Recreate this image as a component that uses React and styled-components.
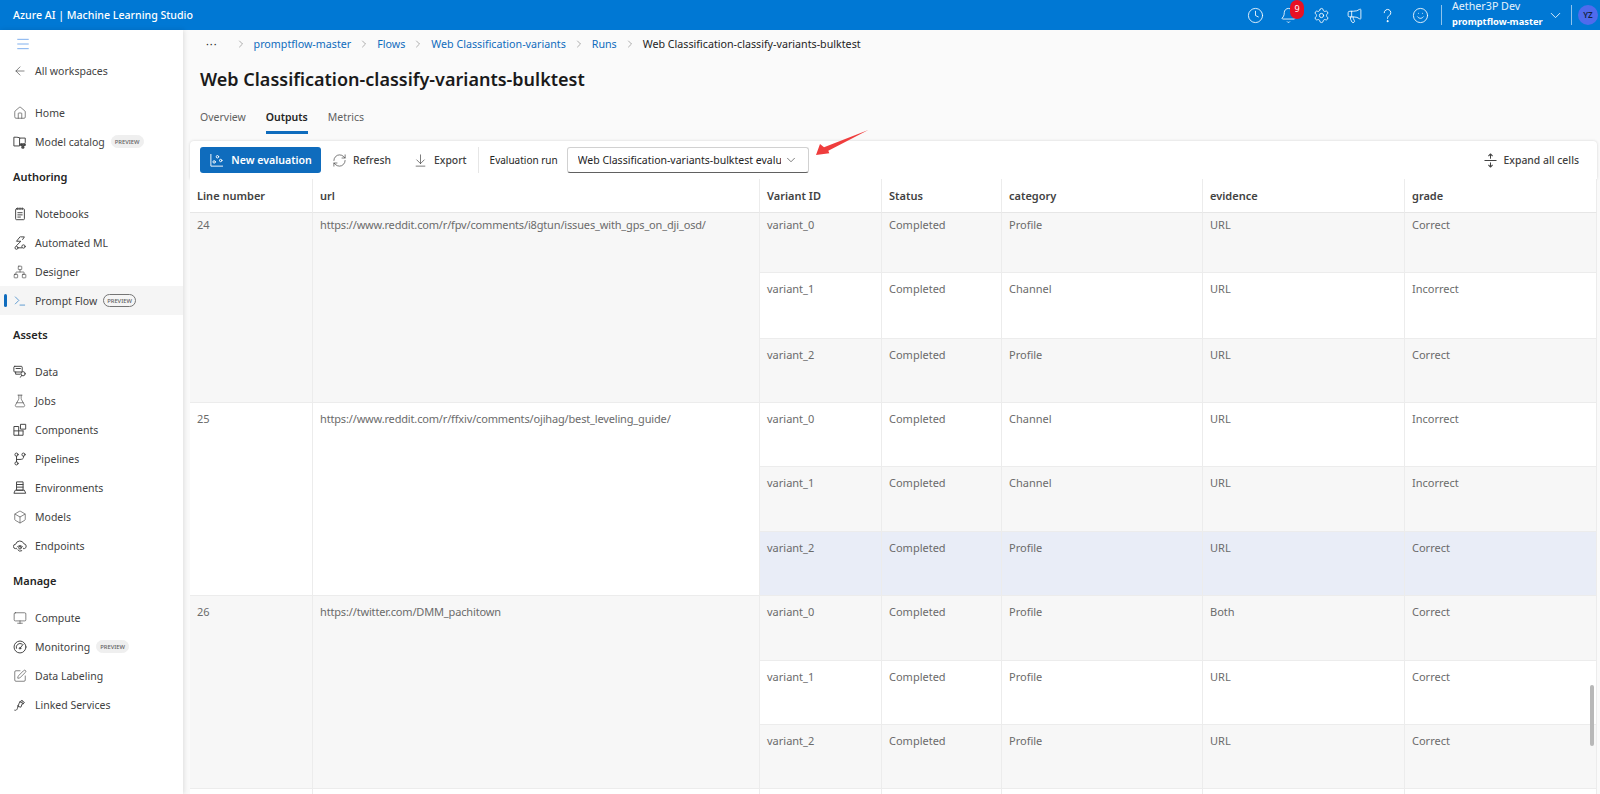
import React from 'react';
import styled, { createGlobalStyle } from 'styled-components';
import {
  ArrowLeft, Box, ChevronDown, ChevronRight, Clock, FlaskConical, Home,
  Menu, Monitor, Network, Settings, Smile, SquarePen, Terminal, Bell, Megaphone,
  RefreshCw, ArrowDownToLine,
} from 'lucide-react';

const FONT = '"Noto Sans", "Open Sans", sans-serif';

const GlobalStyle = createGlobalStyle`
  html, body { margin: 0; height: 100%; overflow: hidden; background: #fafafa; }
  body { font-family: ${FONT}; font-size: 11px; color: #242424; }
  #root { height: 100%; }
  * { box-sizing: border-box; }
`;

const Page = styled.div`
  height: 794px;
  display: flex;
  flex-direction: column;
  position: relative;
  overflow: hidden;
`;

const TopBar = styled.header`
  height: 30px;
  flex: none;
  display: flex;
  align-items: center;
  background: #0078d4;
  color: #fff;
  padding-left: 13px;
`;

const Brand = styled.div`
  font-size: 10.6px;
  font-weight: 500;
  flex: 1;
`;

const TopIcon = styled.span`
  position: relative;
  width: 33px;
  height: 30px;
  display: flex;
  align-items: center;
  justify-content: center;
  svg { width: ${p => (p.$small ? 15 : 17)}px; height: ${p => (p.$small ? 15 : 17)}px; stroke-width: ${p => (p.$small ? 1 : 1.2)}; }
`;

const Badge = styled.span`
  position: absolute;
  top: 0;
  left: 18px;
  width: 14px;
  height: 19px;
  border-radius: 7px;
  background: #e81123;
  font-size: 9px;
  line-height: 18px;
  text-align: center;
`;

const TopDivider = styled.span`
  width: 1px;
  height: 20px;
  background: #8fc3ec;
  margin: 0 ${p => p.$right}px 0 ${p => p.$left}px;
`;

const Account = styled.div`
  width: 95px;
  padding-bottom: 2px;
  white-space: nowrap;
  line-height: 15px;
  font-size: 10.7px;
  color: #e6f2fb;
  b { display: block; font-size: 9.3px; font-weight: 700; color: #fff; }
`;

const Avatar = styled.span`
  width: 20px;
  height: 20px;
  margin-right: 2px;
  border-radius: 50%;
  background: #4f6bed;
  color: #12233f;
  font-size: 8px;
  font-weight: 600;
  line-height: 20px;
  text-align: center;
`;

const Body = styled.div`
  flex: 1;
  display: flex;
  min-height: 0;
`;

const Sidebar = styled.nav`
  width: 183px;
  flex: none;
  background: #fff;
  box-shadow: 1px 0 5px rgba(0, 0, 0, 0.12);
  padding-top: 2px;
  color: #424242;
  z-index: 1;
`;

const Burger = styled.div`
  height: 24px;
  padding-left: 15px;
  display: flex;
  align-items: center;
  color: #3f88e6;
  svg { width: 16px; height: 16px; stroke-width: 1; }
`;

const Item = styled.div`
  position: relative;
  height: 29px;
  padding-left: 13px;
  display: flex;
  align-items: center;
  gap: 8px;
  font-size: 10.5px;
  background: ${p => (p.$active ? '#f5f5f5' : 'transparent')};
  svg { width: 14px; height: 14px; flex: none; stroke-width: 1.1; color: ${p => (p.$active ? '#0f6cbd' : '#424242')}; }
  &::before {
    content: ${p => (p.$active ? "''" : 'none')};
    position: absolute;
    left: 4px;
    top: 8px;
    width: 3px;
    height: 13px;
    border-radius: 2px;
    background: #0f6cbd;
  }
`;

const NavGroup = styled.div`
  margin-top: ${p => p.$top}px;
`;

const SectionTitle = styled.div`
  height: 29px;
  margin-top: ${p => p.$top}px;
  padding-left: 13px;
  font-size: 11px;
  font-weight: 600;
  line-height: 29px;
  color: #242424;
`;

const Preview = styled.span`
  font-size: 5.8px;
  font-weight: 500;
  line-height: 12px;
  height: 13px;
  padding: 0 3px;
  border-radius: 7px;
  margin-left: -2px;
  color: #616161;
  background: ${p => (p.$outlined ? 'transparent' : '#efefef')};
  border: 1px solid ${p => (p.$outlined ? '#757575' : '#efefef')};
`;

const Main = styled.main`
  flex: 1;
  min-width: 0;
  display: flex;
  flex-direction: column;
  padding: 0 3px 0 7px;
`;

const Crumbs = styled.div`
  height: 27px;
  flex: none;
  display: flex;
  align-items: center;
  padding-left: 16px;
  font-size: 10.7px;
  color: #242424;
  svg { width: 12px; height: 12px; stroke-width: 1; color: #616161; margin: 0 7px; }
`;

const Dots = styled.span`
  letter-spacing: 1px;
  margin-right: 10px;
`;

const Crumb = styled.a`
  color: #0f6cbd;
`;

const Title = styled.h1`
  margin: 8px 0 0 10px;
  height: 28px;
  flex: none;
  font-size: 18px;
  font-weight: 600;
  line-height: 28px;
  color: #1a1a1a;
`;

const Tabs = styled.div`
  display: flex;
  flex: none;
  gap: 20px;
  margin: 14px 0 0 10px;
  height: 27px;
`;

const Tab = styled.span`
  position: relative;
  font-size: 10.5px;
  line-height: 20px;
  color: ${p => (p.$active ? '#242424' : '#616161')};
  font-weight: ${p => (p.$active ? 600 : 400)};
  &::after {
    content: ${p => (p.$active ? "''" : 'none')};
    position: absolute;
    left: 0;
    right: 0;
    bottom: 0;
    height: 3px;
    background: #0f6cbd;
  }
`;

const Toolbar = styled.div`
  height: 38px;
  margin-top: 7px;
  flex: none;
  display: flex;
  align-items: center;
  padding: 0 18px 0 10px;
  background: #fff;
  border-radius: 4px 4px 0 0;
  box-shadow: 0 0 3px rgba(0, 0, 0, 0.16);
  font-size: 10px;
  white-space: nowrap;
`;

const PrimaryButton = styled.button`
  height: 26px;
  width: 121px;
  border: 0;
  border-radius: 3px;
  background: #0f6cbd;
  color: #fff;
  display: flex;
  align-items: center;
  justify-content: center;
  gap: 7px;
  white-space: nowrap;
  font: 600 10.6px ${FONT};
  svg { width: 15px; height: 15px; }
`;

const ToolButton = styled.span`
  display: flex;
  align-items: center;
  gap: 6px;
  margin-left: ${p => p.$left}px;
  font-size: 10.4px;
  font-weight: 500;
  color: #424242;
  svg { width: 15px; height: 15px; stroke-width: 1.1; }
`;

const ToolDivider = styled.span`
  width: 1px;
  height: 26px;
  margin: 0 11px;
  background: #e6e6e6;
`;

const Select = styled.div`
  width: 242px;
  height: 26px;
  margin-left: 9px;
  padding: 0 10px;
  display: flex;
  align-items: center;
  gap: 3px;
  border: 1px solid #d1d1d1;
  border-bottom-color: #616161;
  border-radius: 3px;
  font-size: 10.5px;
  span { flex: 1; overflow: hidden; white-space: nowrap; }
  svg { width: 14px; height: 14px; flex: none; stroke-width: 1; }
`;

const Spacer = styled.span`
  flex: 1;
`;

const TableWrap = styled.div`
  flex: 1;
  min-height: 0;
  overflow: hidden;
`;

const Table = styled.table`
  width: 1407px;
  table-layout: fixed;
  border-collapse: separate;
  border-spacing: 0;
  font-size: 11px;
  color: #6b6b6b;
`;

const Th = styled.th`
  height: 34px;
  padding: 0 7px;
  text-align: left;
  font-weight: 600;
  color: #424242;
  background: #fff;
  border-right: 1px solid #ececec;
  border-bottom: 1px solid #e6e6e6;
`;

const Td = styled.td`
  padding: ${p => (p.$scrolled ? 4 : 8)}px 7px 4px;
  vertical-align: top;
  line-height: 16px;
  white-space: nowrap;
  letter-spacing: ${p => (p.$url ? '-0.16px' : 'normal')};
  background: ${p => p.$bg};
  border-right: 1px solid #ececec;
  border-bottom: 1px solid #ececec;
`;

const Row = styled.tr`
  height: ${p => p.$h}px;
`;

const ScrollThumb = styled.div`
  position: absolute;
  left: 1590px;
  top: 685px;
  width: 4px;
  height: 61px;
  border-radius: 2px;
  background: #b8b8b8;
`;

const ArrowMark = styled.svg`
  position: absolute;
  left: 815px;
  top: 128px;
  width: 56px;
  height: 28px;
`;

const Thin = ({ children }) => (
  <svg viewBox="0 0 16 16" fill="none" stroke="currentColor" strokeLinecap="round" strokeLinejoin="round">{children}</svg>
);

const CatalogIcon = () => (
  <Thin>
    <path d="M8 3.500C7 2.600 5 2.500 1 2.500v10h6.500V3.500h6.500v5" />
    <rect x="9" y="10" width="2" height="2" fill="currentColor" />
    <rect x="12" y="10" width="2" height="2" fill="currentColor" />
    <rect x="10.500" y="13" width="2" height="2" fill="currentColor" />
  </Thin>
);
const NotebookIcon = () => (
  <Thin>
    <rect x="3" y="2" width="10" height="12.500" rx="1" />
    <path d="M5.500 1v2M8 1v2M10.500 1v2M5.500 6.500h5M5.500 9h5M5.500 11.500h3" />
  </Thin>
);
const AutoMlIcon = () => (
  <Thin>
    <path d="M8 1 4 6h5l-5 5" />
    <path d="M9 1h4l-2 3" />
    <circle cx="4" cy="13.500" r="1.700" />
    <circle cx="12" cy="12" r="1.900" />
    <path d="M6 13.500h4" />
  </Thin>
);
const DataIcon = () => (
  <Thin>
    <rect x="1" y="1.500" width="9.500" height="6.500" rx="1" />
    <path d="M3 8v2.500h5M3.500 4h5" />
    <circle cx="11.500" cy="10" r="2.400" />
    <path d="M9.800 12 8.500 14" />
  </Thin>
);
const ComponentsIcon = () => (
  <Thin>
    <path d="M1.500 4h5v10h-5zM1.500 9h10M6.500 14h5V9" />
    <rect x="9" y="1.500" width="5.500" height="5.500" />
  </Thin>
);
const PipelineIcon = () => (
  <Thin>
    <circle cx="4" cy="3" r="1.800" />
    <circle cx="12" cy="3" r="1.800" />
    <circle cx="4" cy="13" r="1.800" />
    <path d="M4 4.800v6.400M12 4.800V6c0 2-2 2.500-4 2.500H4" />
  </Thin>
);
const EnvironmentIcon = () => (
  <Thin>
    <rect x="4.500" y="1" width="7" height="9.500" />
    <path d="M4.500 4h7M4.500 7h7M3 10.500h10l1.500 3.500h-13z" />
  </Thin>
);
const EndpointIcon = () => (
  <Thin>
    <path d="M4 11H3a2.500 2.500 0 0 1 0-5 5 5 0 0 1 9.500-.5A2.800 2.800 0 0 1 13 11h-1" />
    <circle cx="8" cy="10" r="1.500" />
    <path d="M5 9a3.500 3.500 0 0 1 6 0M5.500 12.500a3.500 3.500 0 0 0 4.500 1" />
  </Thin>
);
const GaugeIcon = () => (
  <Thin>
    <circle cx="8" cy="8" r="6.800" />
    <path d="M3.800 9.500a4.500 4.500 0 0 1 6.500-5M8 9.500l3.500-4.500" />
    <circle cx="8" cy="9.500" r=".9" />
  </Thin>
);
const LinkedIcon = () => (
  <Thin>
    <path d="M2 14c1.500.5 2.500-.5 3-2l2-6c.5-1.500 2-3 3.500-3" />
    <path d="M5 9c1 .5 3 1.500 4 1.500l2-5c-1-.5-2.500-1-3.500-1" />
    <path d="M10 3l3 2-1.500 2" />
  </Thin>
);
const EvalIcon = () => (
  <Thin>
    <path d="M2 1.500v12.500h12.500" />
    <circle cx="5.500" cy="9.500" r="1.300" />
    <circle cx="9" cy="4" r="1.300" />
    <circle cx="12.500" cy="8" r="1.300" />
  </Thin>
);
const QuestionIcon = () => (
  <Thin>
    <path d="M4.500 5a3.500 3.500 0 1 1 5.500 2.900C8.800 8.700 8 9.500 8 11" />
    <circle cx="8" cy="14" r=".6" fill="currentColor" />
  </Thin>
);
const ExpandIcon = () => (
  <Thin>
    <path d="M8 1v4.500M6 3l2-2 2 2M8 15v-4.500M6 13l2 2 2-2M2 8h12" />
  </Thin>
);

const workspaceItems = [
  { icon: <Home />, label: 'Home' },
  { icon: <CatalogIcon />, label: 'Model catalog', preview: 'fill' },
];
const authoringItems = [
  { icon: <NotebookIcon />, label: 'Notebooks' },
  { icon: <AutoMlIcon />, label: 'Automated ML' },
  { icon: <Network />, label: 'Designer' },
  { icon: <Terminal />, label: 'Prompt Flow', preview: 'outline', active: true },
];
const assetItems = [
  { icon: <DataIcon />, label: 'Data' },
  { icon: <FlaskConical />, label: 'Jobs' },
  { icon: <ComponentsIcon />, label: 'Components' },
  { icon: <PipelineIcon />, label: 'Pipelines' },
  { icon: <EnvironmentIcon />, label: 'Environments' },
  { icon: <Box />, label: 'Models' },
  { icon: <EndpointIcon />, label: 'Endpoints' },
];
const manageItems = [
  { icon: <Monitor />, label: 'Compute' },
  { icon: <GaugeIcon />, label: 'Monitoring', preview: 'fill' },
  { icon: <SquarePen />, label: 'Data Labeling' },
  { icon: <LinkedIcon />, label: 'Linked Services' },
];

const GRAY = '#f7f7f7';
const WHITE = '#ffffff';
const BLUE = '#e9edf7';

// the first group is scrolled partly out of view, so its text sits higher
const groups = [
  {
    line: 24,
    url: 'https://www.reddit.com/r/fpv/comments/i8gtun/issues_with_gps_on_dji_osd/',
    bg: GRAY,
    scrolled: true,
    rows: [
      { h: 60, bg: GRAY, cat: 'Profile', ev: 'URL', grade: 'Correct', scrolled: true },
      { h: 66, bg: WHITE, cat: 'Channel', ev: 'URL', grade: 'Incorrect' },
      { h: 64, bg: GRAY, cat: 'Profile', ev: 'URL', grade: 'Correct' },
    ],
  },
  {
    line: 25,
    url: 'https://www.reddit.com/r/ffxiv/comments/ojihag/best_leveling_guide/',
    bg: WHITE,
    rows: [
      { h: 64, bg: WHITE, cat: 'Channel', ev: 'URL', grade: 'Incorrect' },
      { h: 65, bg: GRAY, cat: 'Channel', ev: 'URL', grade: 'Incorrect' },
      { h: 64, bg: BLUE, cat: 'Profile', ev: 'URL', grade: 'Correct' },
    ],
  },
  {
    line: 26,
    url: 'https://twitter.com/DMM_pachitown',
    bg: GRAY,
    rows: [
      { h: 65, bg: GRAY, cat: 'Profile', ev: 'Both', grade: 'Correct' },
      { h: 64, bg: WHITE, cat: 'Profile', ev: 'URL', grade: 'Correct' },
      { h: 64, bg: GRAY, cat: 'Profile', ev: 'URL', grade: 'Correct' },
    ],
  },
];

const columns = [
  { label: 'Line number', width: 123 },
  { label: 'url', width: 447 },
  { label: 'Variant ID', width: 122 },
  { label: 'Status', width: 120 },
  { label: 'category', width: 201 },
  { label: 'evidence', width: 202 },
  { label: 'grade', width: 192 },
];

const NavItems = ({ items }) => items.map(item => (
  <Item key={item.label} $active={item.active}>
    {item.icon}
    {item.label}
    {item.preview && <Preview $outlined={item.preview === 'outline'}>PREVIEW</Preview>}
  </Item>
));

const App = () => (
  <Page>
    <GlobalStyle />
    <TopBar>
      <Brand>Azure AI | Machine Learning Studio</Brand>
      <TopIcon><Clock /></TopIcon>
      <TopIcon><Bell /><Badge>9</Badge></TopIcon>
      <TopIcon><Settings /></TopIcon>
      <TopIcon><Megaphone /></TopIcon>
      <TopIcon $small><QuestionIcon /></TopIcon>
      <TopIcon><Smile /></TopIcon>
      <TopDivider $left={4} $right={10} />
      <Account>Aether3P Dev<b>promptflow-master</b></Account>
      <ChevronDown size={17} strokeWidth={1.2} />
      <TopDivider $left={7} $right={6} />
      <Avatar>YZ</Avatar>
    </TopBar>
    <Body>
      <Sidebar>
        <Burger><Menu /></Burger>
        <Item><ArrowLeft />All workspaces</Item>
        <NavGroup $top={13}><NavItems items={workspaceItems} /></NavGroup>
        <SectionTitle $top={6}>Authoring</SectionTitle>
        <NavGroup $top={8}><NavItems items={authoringItems} /></NavGroup>
        <SectionTitle $top={5}>Assets</SectionTitle>
        <NavGroup $top={8}><NavItems items={assetItems} /></NavGroup>
        <SectionTitle $top={6}>Manage</SectionTitle>
        <NavGroup $top={8}><NavItems items={manageItems} /></NavGroup>
      </Sidebar>
      <Main>
        <Crumbs>
          <Dots>···</Dots>
          <ChevronRight />
          <Crumb>promptflow-master</Crumb>
          <ChevronRight />
          <Crumb>Flows</Crumb>
          <ChevronRight />
          <Crumb>Web Classification-variants</Crumb>
          <ChevronRight />
          <Crumb>Runs</Crumb>
          <ChevronRight />
          Web Classification-classify-variants-bulktest
        </Crumbs>
        <Title>Web Classification-classify-variants-bulktest</Title>
        <Tabs>
          <Tab>Overview</Tab>
          <Tab $active>Outputs</Tab>
          <Tab>Metrics</Tab>
        </Tabs>
        <Toolbar>
          <PrimaryButton><EvalIcon />New evaluation</PrimaryButton>
          <ToolButton $left={11}><RefreshCw />Refresh</ToolButton>
          <ToolButton $left={22}><ArrowDownToLine />Export</ToolButton>
          <ToolDivider />
          Evaluation run
          <Select>
            <span>Web Classification-variants-bulktest evaluation</span>
            <ChevronDown />
          </Select>
          <Spacer />
          <ToolButton><ExpandIcon />Expand all cells</ToolButton>
        </Toolbar>
        <TableWrap>
          <Table>
            <colgroup>
              {columns.map(c => <col key={c.label} width={c.width} />)}
            </colgroup>
            <thead>
              <tr>{columns.map(c => <Th key={c.label}>{c.label}</Th>)}</tr>
            </thead>
            <tbody>
              {groups.map(g => g.rows.map((r, i) => (
                <Row key={`${g.line}-${i}`} $h={r.h}>
                  {i === 0 && <Td rowSpan={3} $bg={g.bg} $scrolled={g.scrolled}>{g.line}</Td>}
                  {i === 0 && <Td rowSpan={3} $bg={g.bg} $scrolled={g.scrolled} $url>{g.url}</Td>}
                  <Td $bg={r.bg} $scrolled={r.scrolled}>variant_{i}</Td>
                  <Td $bg={r.bg} $scrolled={r.scrolled}>Completed</Td>
                  <Td $bg={r.bg} $scrolled={r.scrolled}>{r.cat}</Td>
                  <Td $bg={r.bg} $scrolled={r.scrolled}>{r.ev}</Td>
                  <Td $bg={r.bg} $scrolled={r.scrolled}>{r.grade}</Td>
                </Row>
              )))}
              <Row $h={20}>
                {columns.map(c => <Td key={c.label} $bg={WHITE} />)}
              </Row>
            </tbody>
          </Table>
        </TableWrap>
      </Main>
    </Body>
    <ScrollThumb />
    <ArrowMark viewBox="0 0 56 28">
      <path d="M1 27 5 16l4 3.300L53.300 2 13.300 22.700l1 2.600z" fill="#ef3d3d" />
    </ArrowMark>
  </Page>
);

export default App;
